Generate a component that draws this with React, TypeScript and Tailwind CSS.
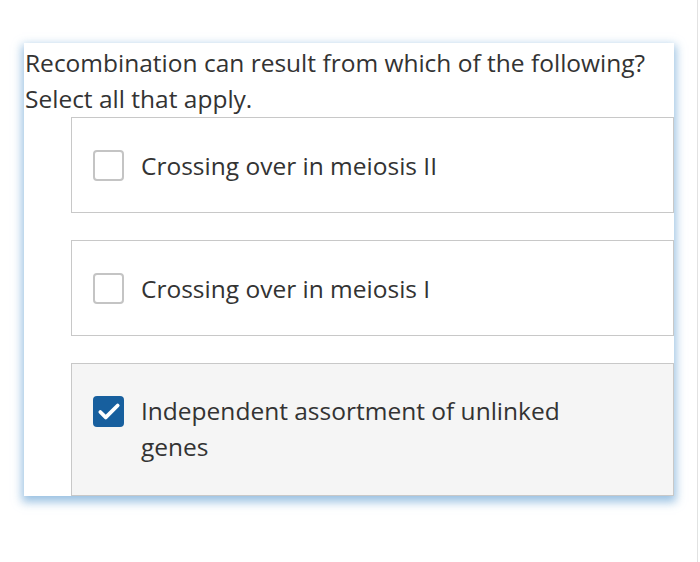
import { Check } from 'lucide-react';

type Option = { label: string; checked: boolean };

const OPTIONS: Option[] = [
  { label: 'Crossing over in meiosis II', checked: false },
  { label: 'Crossing over in meiosis I', checked: false },
  { label: 'Independent assortment of unlinked genes', checked: true },
];

function Checkbox({ checked }: { checked: boolean }) {
  if (checked) {
    return (
      <span className="flex h-[31px] w-[31px] shrink-0 items-center justify-center rounded-[4px] bg-[#175f9e]">
        <Check className="h-[26px] w-[26px] text-white" strokeWidth={3.5} />
      </span>
    );
  }
  return <span className="h-[31px] w-[31px] shrink-0 rounded-[4px] border-2 border-[#c4c4c4] bg-white" />;
}

export default function App() {
  return (
    <div className="relative h-[562px] w-[700px] overflow-hidden bg-white font-['Open_Sans',sans-serif] text-[#333]">
      <div className="absolute right-[2px] top-0 h-full w-px bg-[#e2e2e2]" />
      <div className="ml-[24px] mt-[43px] w-[650px] bg-white shadow-[0_4px_9px_2px_rgba(100,160,210,0.65)]">
        <p className="pl-[1px] pt-[2px] text-[24.5px] leading-[36px]">
          Recombination can result from which of the following? Select all that apply.
        </p>
        <div className="ml-[47px] flex flex-col gap-[27px]">
          {OPTIONS.map((o) => (
            <div
              key={o.label}
              className={
                o.checked
                  ? 'flex items-start gap-[17px] border border-[#c8c8c8] bg-[#f5f5f5] pb-[30px] pl-[21px] pr-[60px] pt-[32px]'
                  : 'flex h-[96px] items-center gap-[17px] border border-[#c8c8c8] bg-white pl-[21px] pr-[60px]'
              }
            >
              <Checkbox checked={o.checked} />
              <span className={o.checked ? '-mt-[3px] text-[24.5px] leading-[36px]' : 'pt-[2px] text-[24.5px] leading-[36px]'}>
                {o.label}
              </span>
            </div>
          ))}
        </div>
      </div>
    </div>
  );
}
